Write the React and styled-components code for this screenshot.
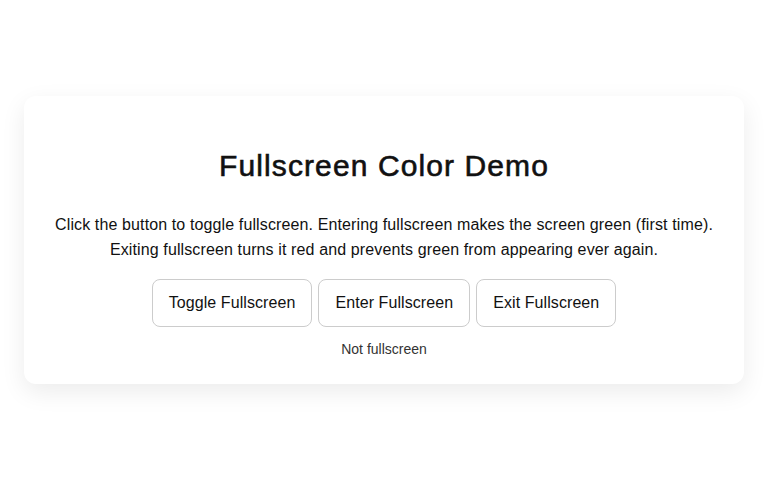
import { useState, useEffect } from "react";
import styled, { createGlobalStyle } from "styled-components";

const GlobalStyle = createGlobalStyle`
  html, body {
    margin: 0;
    padding: 0;
    background: #ffffff;
    font-family: "Liberation Sans", Arial, sans-serif;
    color: #111;
  }
`;

export default function App() {
  const [isFull, setIsFull] = useState(false);

  useEffect(() => {
    const onChange = () => setIsFull(!!document.fullscreenElement);
    document.addEventListener("fullscreenchange", onChange);
    return () => document.removeEventListener("fullscreenchange", onChange);
  }, []);

  function enter() {
    document.documentElement.requestFullscreen?.().catch(() => {});
  }

  function exit() {
    if (document.fullscreenElement) document.exitFullscreen?.();
  }

  function toggle() {
    if (document.fullscreenElement) exit();
    else enter();
  }

  return (
    <>
      <GlobalStyle />
      <Page>
        <Card>
          <Title>Fullscreen Color Demo</Title>
          <Intro>
            Click the button to toggle fullscreen. Entering fullscreen makes the
            screen green (first time).
            <br />
            Exiting fullscreen turns it red and prevents green from appearing
            ever again.
          </Intro>
          <ButtonRow>
            <Button onClick={toggle}>Toggle Fullscreen</Button>
            <Button onClick={enter}>Enter Fullscreen</Button>
            <Button onClick={exit}>Exit Fullscreen</Button>
          </ButtonRow>
          <Status>{isFull ? "Fullscreen" : "Not fullscreen"}</Status>
        </Card>
      </Page>
    </>
  );
}

const Page = styled.main`
  min-height: 100vh;
  display: flex;
  align-items: center;
  justify-content: center;
  padding: 0 24px;
  box-sizing: border-box;
`;

const Card = styled.section`
  width: 720px;
  height: 288px;
  box-sizing: border-box;
  background: #fff;
  border-radius: 12px;
  box-shadow: 0 8px 24px rgba(0, 0, 0, 0.08);
  padding: 32px 24px 28px;
  text-align: center;
`;

/* semi-bold look: regular face thickened with a hairline stroke */
const Title = styled.h1`
  font-size: 30px;
  font-weight: 400;
  line-height: 34px;
  letter-spacing: 1.1px;
  -webkit-text-stroke: 0.6px #111;
  margin: 21px 0 29px;
  color: #111;
`;

const Intro = styled.p`
  font-size: 16px;
  line-height: 25px;
  letter-spacing: 0.12px;
  margin: 0 0 17px;
  color: #111;
`;

const ButtonRow = styled.div`
  display: flex;
  justify-content: center;
  gap: 6px;
`;

const Button = styled.button`
  font-family: inherit;
  font-size: 16px;
  letter-spacing: 0.08px;
  line-height: 18px;
  color: #111;
  background: #fff;
  border: 1px solid #ccc;
  border-radius: 8px;
  padding: 14px 16px;
  cursor: pointer;
`;

const Status = styled.div`
  margin-top: 14px;
  font-size: 14px;
  line-height: 16px;
  color: #333;
`;
